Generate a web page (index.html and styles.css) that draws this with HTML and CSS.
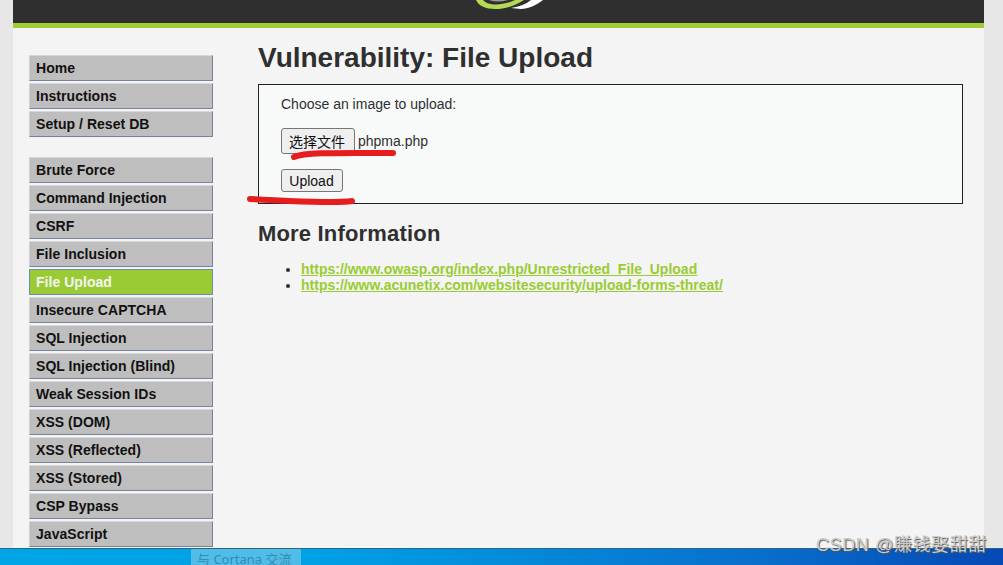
FILE: index.html
```html
<!DOCTYPE html>
<html lang="en">
<head>
  <meta charset="UTF-8">
  <title>Vulnerability: File Upload</title>
  <link rel="stylesheet" href="styles.css">
</head>
<body>

<div id="container">
  <div id="header">
    <svg class="logo" width="100" height="23" viewBox="0 0 100 23">
      <path d="M39 0 Q47 3 58 0Z" fill="#999"/>
      <path d="M26 0 C31 12 56 12 74 0 L65 0 C52 6 38 6 33 0Z" fill="#b5d957"/>
      <path d="M61 8 Q74 6 81 0 L93 0 C84 7 76 10 66 8.500Z" fill="#fff"/>
    </svg>
  </div>

  <div id="main">
    <div id="menu">
      <ul>
        <li>Home</li>
        <li>Instructions</li>
        <li>Setup / Reset DB</li>
      </ul>
      <ul>
        <li>Brute Force</li>
        <li>Command Injection</li>
        <li>CSRF</li>
        <li>File Inclusion</li>
        <li class="selected">File Upload</li>
        <li>Insecure CAPTCHA</li>
        <li>SQL Injection</li>
        <li>SQL Injection (Blind)</li>
        <li>Weak Session IDs</li>
        <li>XSS (DOM)</li>
        <li>XSS (Reflected)</li>
        <li>XSS (Stored)</li>
        <li>CSP Bypass</li>
        <li>JavaScript</li>
      </ul>
    </div>

    <div id="content">
      <h1>Vulnerability: File Upload</h1>
      <form class="vulnerable">
        <p>Choose an image to upload:</p>
        <div class="file"><button type="button" class="choose">选择文件</button><span>phpma.php</span></div>
        <button type="button" class="upload">Upload</button>
      </form>
      <h2>More Information</h2>
      <ul class="links">
        <li><a href="#">https://www.owasp.org/index.php/Unrestricted_File_Upload</a></li>
        <li><a href="#">https://www.acunetix.com/websitesecurity/upload-forms-threat/</a></li>
      </ul>
    </div>
  </div>
</div>

<div id="taskbar"><div class="cortana">与 Cortana 交流</div></div>

<!-- red pen marks -->
<svg class="marks" width="160" height="70" viewBox="240 140 160 70">
  <path d="M294 157 C306 152 340 153 393 153"/>
  <path d="M250 199 C275 200 295 202 322 202 C338 202 346 202 352 201"/>
</svg>
<div class="watermark">CSDN @賺钱娶甜甜</div>

</body>
</html>
```
FILE: styles.css
```css
* { margin:0; padding:0; box-sizing:border-box; }

body { height:565px; overflow:hidden; position:relative; background:#e7e7e7; color:#2f2f2f; font-family:"Liberation Sans", "Noto Sans CJK SC", sans-serif; }

#container { width:971px; height:548px; margin-left:13px; background:#f4f4f4; overflow:hidden; }

#header { height:28px; padding-left:437px; background:#2f2f2f; border-bottom:5px solid #a1cc33; }
#header .logo { display:block; }

#main { display:flex; }

#menu { width:184px; margin:27px 0 0 16px; }
#menu ul { list-style:none; margin-bottom:18px; }
#menu li { height:26px; margin-bottom:2px; padding-left:6px; line-height:24px; background:#bebebe; border:1px solid; border-color:#d8d8d8 #77839a #77839a #d0d0d0; color:#111; font-size:14px; font-weight:bold; letter-spacing:.04px; white-space:nowrap; }
#menu ul + ul { margin-top:20px; }
#menu ul:first-child { margin-bottom:0; }
#menu li.selected { background:#9c3; border-color:#7089b5; color:#f4f4f4; }

#content { width:705px; margin-left:45px; }

h1 { margin-top:13px; font-size:28px; line-height:33px; }
h2 { margin-top:17px; font-size:22px; line-height:26px; letter-spacing:.18px; }

.vulnerable { height:120px; margin-top:10px; padding:10px 22px; background:#f8fafa; border:1px solid #222; font-size:14px; }
.vulnerable p { line-height:18px; }
.vulnerable button { display:block; background:#efefef; border:1px solid #767676; border-radius:3px; color:#111; font-family:inherit; font-size:14px; }
.file { display:flex; align-items:center; gap:3px; margin:15px 0; line-height:18px; }
.vulnerable .choose { width:74px; height:26px; padding-right:2px; }
.vulnerable .upload { width:62px; height:23px; padding-right:1px; }

.links { margin-top:14px; padding-left:43px; font-size:14px; line-height:16px; }
.links a { color:#9c3; font-weight:bold; }

#taskbar { height:17px; padding-left:191px; background:linear-gradient(90deg, #00a5e5, #00a2e6 30%, #0870cc 75%, #0648b4); border-top:1px solid #28677f; overflow:hidden; }
.cortana { width:110px; height:16px; padding-left:6px; background:#50bde8; color:#348bb2; font-family:"Noto Sans", "Noto Sans CJK SC", sans-serif; font-size:13px; line-height:20px; white-space:nowrap; }

.marks { position:absolute; left:240px; top:140px; }
.marks path { fill:none; stroke:#e71d1d; stroke-width:6; stroke-linecap:round; }

.watermark { position:absolute; left:816px; top:532px; color:#ccc; font-size:18px; line-height:26px; letter-spacing:.6px; white-space:nowrap; text-shadow:1px 1px 1px #555; }
```
